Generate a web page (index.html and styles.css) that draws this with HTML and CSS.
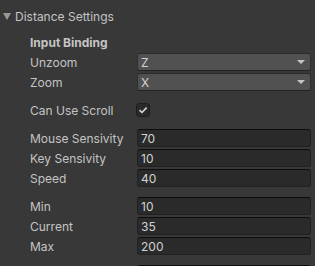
FILE: index.html
```html
<!DOCTYPE html>
<html lang="en">
<head>
    <meta charset="UTF-8">
    <title>Distance Settings</title>
    <link rel="stylesheet" href="styles.css">
</head>
<body>
    <div class="foldout">
        <span class="arrow"></span>
        <span class="foldout-title">Distance Settings</span>
    </div>

    <div class="content">
        <div class="group">
            <div class="row"><span class="label bold">Input Binding</span></div>
            <div class="row">
                <span class="label">Unzoom</span>
                <div class="field dropdown"><span>Z</span><span class="caret"></span></div>
            </div>
            <div class="row">
                <span class="label">Zoom</span>
                <div class="field dropdown"><span>X</span><span class="caret"></span></div>
            </div>
        </div>

        <div class="group">
            <div class="row">
                <span class="label">Can Use Scroll</span>
                <div class="toggle">
                    <svg width="10" height="10" viewBox="0 0 10 10">
                        <path d="M1.5 5.2 L4 7.5 L8.6 2.6" fill="none" stroke="#d8d8d8" stroke-width="1.6"/>
                    </svg>
                </div>
            </div>
        </div>

        <div class="group">
            <div class="row">
                <span class="label">Mouse Sensivity</span>
                <div class="field number">70</div>
            </div>
            <div class="row">
                <span class="label">Key Sensivity</span>
                <div class="field number">10</div>
            </div>
            <div class="row">
                <span class="label">Speed</span>
                <div class="field number">40</div>
            </div>
        </div>

        <div class="group">
            <div class="row">
                <span class="label">Min</span>
                <div class="field number">10</div>
            </div>
            <div class="row">
                <span class="label">Current</span>
                <div class="field number">35</div>
            </div>
            <div class="row">
                <span class="label">Max</span>
                <div class="field number">200</div>
            </div>
        </div>

        <!-- siguiente campo, solo asoma el borde superior -->
        <div class="group">
            <div class="row">
                <span class="label"></span>
                <div class="field number"></div>
            </div>
        </div>
    </div>
</body>
</html>
```

FILE: styles.css
```css
/* General */
body {
    margin: 0;
    background-color: #383838;
    color: #c4c4c4;
    font-family: Inter, "Noto Sans", sans-serif;
    font-size: 12px;
    overflow: hidden;
}

/* Cabecera plegable */
.foldout {
    display: flex;
    align-items: center;
    height: 18px;
    margin-top: 7px;
    padding-left: 3px;
}

.arrow {
    width: 0;
    height: 0;
    border-left: 4px solid transparent;
    border-right: 4px solid transparent;
    border-top: 7px solid #999;
    margin-right: 4px;
}

.content {
    display: flex;
    flex-direction: column;
    gap: 10px;
    padding: 8px 4px 0 30px;
}

.group {
    display: flex;
    flex-direction: column;
    gap: 2px;
}

.row {
    display: flex;
    align-items: center;
    height: 18px;
}

.label {
    width: 107px;
    flex-shrink: 0;
    white-space: nowrap;
}

.bold {
    font-weight: 700;
}

.field {
    flex: 1;
    height: 18px;
    box-sizing: border-box;
    border-radius: 3px;
    display: flex;
    align-items: center;
    padding-left: 3px;
    color: #d2d2d2;
}

.dropdown {
    background-color: #515151;
    border: 1px solid #303030;
    border-top-color: #2a2a2a;
    border-bottom-color: #242424;
    justify-content: space-between;
    padding-right: 5px;
}

.caret {
    width: 0;
    height: 0;
    border-left: 4px solid transparent;
    border-right: 4px solid transparent;
    border-top: 4px solid #c4c4c4;
}

.number {
    background-color: #2a2a2a;
    border: 1px solid #212121;
    border-top-color: #0d0d0d;
}

.toggle {
    width: 14px;
    height: 14px;
    box-sizing: border-box;
    margin-left: -1px;
    background-color: #2a2a2a;
    border: 1px solid #1e1e1e;
    border-radius: 3px;
    display: flex;
    align-items: center;
    justify-content: center;
}
```
